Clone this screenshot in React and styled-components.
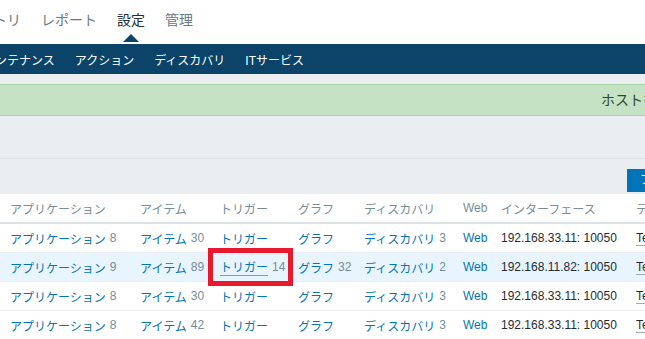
import styled, { createGlobalStyle } from "styled-components";

const GlobalStyle = createGlobalStyle`
  html, body { margin: 0; padding: 0; background: #ebeef0; }
  body { font-family: "Liberation Sans", "Noto Sans CJK JP", sans-serif; }
`

const topMenu = [
    { label: 'インベントリ' },
    { label: 'レポート' },
    { label: '設定', active: true },
    { label: '管理' },
]

const subMenu = ['メンテナンス', 'アクション', 'ディスカバリ', 'ITサービス']

const columns = ['アプリケーション', 'アイテム', 'トリガー', 'グラフ', 'ディスカバリ', 'Web', 'インターフェース', 'テンプレート']

const hosts = [
    { apps: 8, items: 30, triggers: null, graphs: null, disc: 3, ip: '192.168.33.11: 10050' },
    { apps: 9, items: 89, triggers: 14, graphs: 32, disc: 2, ip: '192.168.11.82: 10050', selected: true },
    { apps: 8, items: 30, triggers: null, graphs: null, disc: 3, ip: '192.168.33.11: 10050' },
    { apps: 8, items: 42, triggers: null, graphs: null, disc: 3, ip: '192.168.33.11: 10050' },
]

function Counted({ label, count, hover }) {
    return (
        <Cell>
            <Link $hover={hover}>{label}</Link>
            {count != null && <Count>{count}</Count>}
        </Cell>
    )
}

export default function App() {
    return (
        <Page>
            <GlobalStyle />
            <TopNav>
                {topMenu.map(m => (
                    <TopItem key={m.label} $active={m.active}>{m.label}</TopItem>
                ))}
            </TopNav>
            <SubNav>
                {subMenu.map(s => <SubItem key={s}>{s}</SubItem>)}
            </SubNav>
            <Content>
                <Message>ホストを更新しました</Message>
                <FilterArea />
                <ActionBar>
                    <Button>フィルター</Button>
                </ActionBar>
                <Table>
                    <HeadRow>
                        {columns.map(c => <HeadCell key={c}>{c}</HeadCell>)}
                    </HeadRow>
                    {hosts.map((h, i) => (
                        <Row key={i} $selected={h.selected}>
                            <Counted label="アプリケーション" count={h.apps} />
                            <Counted label="アイテム" count={h.items} />
                            <TriggerCell>
                                <Link $hover={h.selected}>トリガー</Link>
                                {h.triggers != null && <Count>{h.triggers}</Count>}
                                {h.selected && <Marker />}
                            </TriggerCell>
                            <Counted label="グラフ" count={h.graphs} />
                            <Counted label="ディスカバリ" count={h.disc} />
                            <Cell><Link>Web</Link></Cell>
                            <Cell><Plain>{h.ip}</Plain></Cell>
                            <Cell><Template>Template OS Linux</Template></Cell>
                        </Row>
                    ))}
                </Table>
            </Content>
        </Page>
    )
}

const Page = styled.div`
width: 645px;
height: 339px;
overflow: hidden;
position: relative;
background: #ebeef0;
`
const TopNav = styled.div`
height: 44px;
background: #ffffff;
display: flex;
align-items: center;
padding-bottom: 4px;
box-sizing: border-box;
margin-left: -73px;
white-space: nowrap;
`
const TopItem = styled.div`
position: relative;
padding: 0 10px;
font-size: 14px;
line-height: 18px;
color: ${p => p.$active ? '#1f2c33' : '#687a85'};
${p => p.$active && `
&::after{
    content: '';
    position: absolute;
    left: 50%;
    bottom: -13px;
    margin-left: -8px;
    border: 8px solid transparent;
    border-top: 0;
    border-bottom-color: #0b4468;
}
`}
`
const SubNav = styled.div`
height: 30px;
background: #0b4468;
display: flex;
align-items: center;
margin-left: -27px;
white-space: nowrap;
`
const SubItem = styled.div`
padding: 0 10px;
color: #ffffff;
font-size: 12px;
`
const Content = styled.div`
padding-top: 10px;
`
const Message = styled.div`
height: 30px;
line-height: 30px;
background: #c5e2c5;
border-top: 1px solid #a6d5a6;
border-bottom: 1px solid #a6d5a6;
padding-left: 601px;
font-size: 14px;
color: #2b4a2b;
white-space: nowrap;
overflow: hidden;
`
const FilterArea = styled.div`
height: 42px;
border-bottom: 1px solid #dde2e6;
`
const ActionBar = styled.div`
height: 35px;
padding-top: 10px;
padding-left: 627px;
box-sizing: border-box;
white-space: nowrap;
`
const Button = styled.div`
height: 23px;
width: 90px;
background: #0275b8;
color: #ffffff;
font-size: 12px;
line-height: 23px;
padding-left: 13px;
`
const Table = styled.div`
background: #ffffff;
`
const grid = `
display: grid;
grid-template-columns: 130px 80px 78px 66px 99px 38px 135px 1fr;
padding-left: 10px;
white-space: nowrap;
`
const HeadRow = styled.div`
${grid}
height: 28px;
border-bottom: 2px solid #dde2e5;
`
const HeadCell = styled.div`
display: flex;
align-items: center;
font-size: 12px;
color: #768d99;
overflow: hidden;
`
const Row = styled.div`
${grid}
height: 28px;
border-bottom: 1px solid #ebeef0;
background: ${p => p.$selected ? '#e8f5ff' : '#ffffff'};
`
const Cell = styled.div`
display: flex;
align-items: center;
font-size: 12px;
overflow: hidden;
`
const TriggerCell = styled(Cell)`
position: relative;
overflow: visible;
`
const Link = styled.span`
color: #0275b8;
${p => p.$hover && `border-bottom: 1px solid #6fa3cc;`}
`
const Count = styled.span`
color: #768d99;
margin-left: 4px;
`
const Plain = styled.span`
color: #1f2c33;
`
const Template = styled.span`
color: #1f2c33;
border-bottom: 1px solid #a0abb2;
`
const Marker = styled.div`
position: absolute;
left: -12px;
top: -5px;
width: 85px;
height: 38px;
box-sizing: border-box;
border: 5px solid #e8192c;
`
